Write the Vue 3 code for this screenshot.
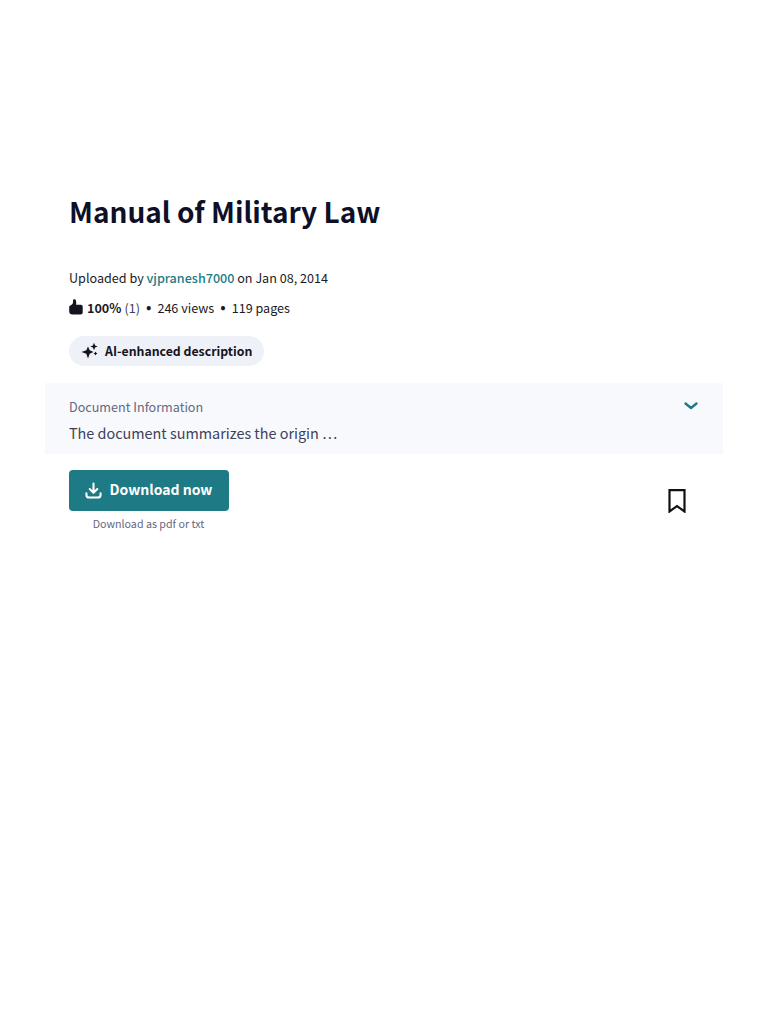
<script setup>
const stats = ['246 views', '119 pages']
</script>

<template>
  <main class="page">
    <div class="head">
      <h1 class="title">Manual of Military Law</h1>
      <p class="upload">Uploaded by <a class="user">vjpranesh7000</a> on Jan 08, 2014</p>
      <div class="stats">
        <svg class="thumb" width="14" height="16" viewBox="0 0 14 16" aria-hidden="true">
          <path fill="#14141e" d="M4 1.500C4 .5 5.400 0 6.200.6c.8.6 1 1.800 1 2.900v2.200h4.500c1.200 0 2 .8 2 1.900v5.600c0 1.300-.9 2.300-2.200 2.300H3.300C1.500 15.500.2 14.300.2 12.700V8.300c0-1.100.7-1.800 1.600-2.100C3 5.700 4 4.700 4 3.500z"/>
        </svg>
        <strong class="pct">100%</strong>
        <span class="count">(1)</span>
        <template v-for="s in stats" :key="s">
          <span class="dot">•</span>
          <span>{{ s }}</span>
        </template>
      </div>
      <div class="pill">
        <svg width="18" height="18" viewBox="0 0 18 18" aria-hidden="true">
          <path fill="#14141e" d="M7 4.500l1.700 3.800 3.800 1.700-3.800 1.700L7 16.500l-1.700-4.800L.5 10l4.800-1.700zM13 .8l1.100 2.600 2.600 1.100-2.600 1.100L13 8.200l-1.100-2.600-2.600-1.100 2.600-1.100zM14.500 9.500l.7 1.300 1.300.7-1.300.7-.7 1.300-.7-1.300-1.300-.7 1.300-.7z"/>
        </svg>
        <span>AI-enhanced description</span>
      </div>
    </div>

    <section class="info">
      <div class="info-text">
        <div class="info-label">Document Information</div>
        <div class="info-body">The document summarizes the origin …</div>
      </div>
      <svg class="chev" width="14" height="8" viewBox="0 0 14 8" aria-hidden="true">
        <path d="M1.500 1.500L7 6l5.500-4.500" fill="none" stroke="#1e7b85" stroke-width="2.400" stroke-linecap="round" stroke-linejoin="round"/>
      </svg>
    </section>

    <div class="actions">
      <div class="dl">
        <button class="btn" type="button">
          <svg width="17" height="17" viewBox="0 0 18 18" aria-hidden="true">
            <path d="M9 1.500v9.500M5 7.500L9 11.300l4-3.800M1.500 12v1.500a3 3 0 0 0 3 3h9a3 3 0 0 0 3-3V12" fill="none" stroke="#fff" stroke-width="2.200" stroke-linecap="round" stroke-linejoin="round"/>
          </svg>
          <span class="btn-label">Download now</span>
        </button>
        <div class="dl-note">Download as pdf or txt</div>
      </div>
      <svg class="mark" width="18" height="24" viewBox="0 0 18 24" aria-hidden="true">
        <path d="M1.500 1.200h15v21.300L9 17l-7.500 5.500z" fill="none" stroke="#111" stroke-width="2.200"/>
      </svg>
    </div>
  </main>
</template>

<style>
html, body { background: #fff; }
</style>

<style scoped>
.page {
  box-sizing: border-box;
  width: 768px;
  height: 1024px;
  padding: 189px 45px 0;
  font-family: "Noto Sans CJK JP", "Noto Sans", sans-serif;
  color: #1a1a24;
}
.head { padding: 0 24px; }
.title {
  margin: 0;
  font-size: 28px;
  line-height: 44px;
  font-weight: 600;
  color: #0d1026;
}
.upload {
  margin: 0;
  padding-top: 34px;
  font-size: 12.600px;
  line-height: 22px;
}
.user { color: #1e7b85; font-weight: 500; }
.stats {
  display: flex;
  align-items: center;
  height: 22px;
  margin-top: 7px;
  font-size: 12.600px;
  color: #1a1a24;
}
.thumb { margin-right: 4px; }
.pct { font-weight: 600; margin-right: 3px; }
.count { color: #3d4257; }
.dot { margin: 0 6px; font-size: 16px; line-height: 16px; position: relative; top: -1px; }
.pill {
  display: inline-flex;
  align-items: center;
  gap: 6px;
  height: 30px;
  margin-top: 18px;
  padding: 0 12px;
  border-radius: 15px;
  background: #eff1f8;
  font-size: 12.300px;
  font-weight: 600;
  line-height: 28px;
  color: #14141e;
}
.pill span { padding-bottom: 1px; }
.info {
  display: flex;
  justify-content: space-between;
  align-items: flex-start;
  height: 71px;
  margin-top: 17px;
  padding: 0 25px 0 24px;
  background: #f8f9fd;
}
.info-label {
  padding-top: 14px;
  font-size: 12.600px;
  line-height: 20px;
  color: #63687f;
}
.info-body {
  margin-top: 4px;
  font-size: 14.400px;
  line-height: 24px;
  color: #3d4257;
}
.chev { margin-top: 19px; }
.actions {
  display: flex;
  justify-content: space-between;
  align-items: flex-start;
  margin-top: 16px;
  padding: 0 37px 0 24px;
}
.dl { width: 160px; }
.btn {
  display: flex;
  align-items: center;
  justify-content: center;
  gap: 8px;
  width: 160px;
  height: 41px;
  padding: 0 1px 0 0;
  border: 0;
  border-radius: 4px;
  background: #1e7b85;
  color: #fff;
  font-family: inherit;
  font-size: 14px;
  font-weight: 600;
}
.btn-label { padding-bottom: 3px; }
.dl-note {
  margin-top: 5px;
  padding-right: 1px;
  text-align: center;
  font-size: 10.700px;
  line-height: 16px;
  color: #63687f;
}
.mark { margin-top: 19px; }
</style>
